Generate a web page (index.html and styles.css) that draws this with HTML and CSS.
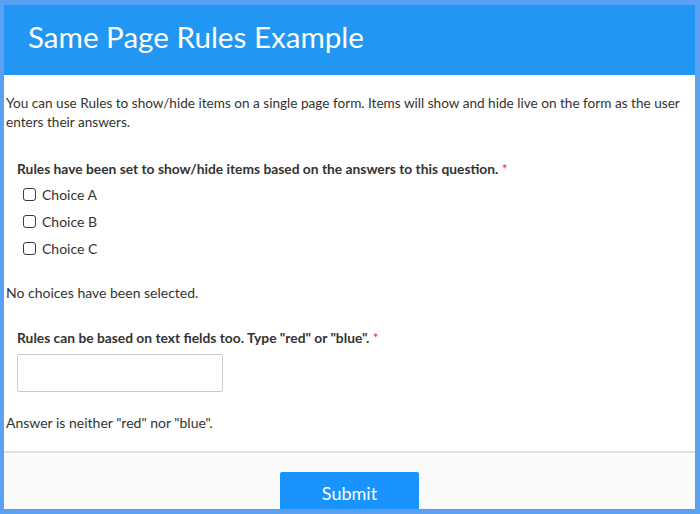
FILE: index.html
```html
<!DOCTYPE html>
<html>
<head>
<meta charset="utf-8">
<link rel="stylesheet" href="styles.css">
</head>
<body>
<div class="frame">
  <header class="header"><h1 class="title">Same Page Rules Example</h1></header>
  <main class="content">
    <p class="intro">You can use Rules to show/hide items on a single page form. Items will show and hide live on the form as the user enters their answers.</p>
    <div class="question q1">
      <div class="label">Rules have been set to show/hide items based on the answers to this question. <span class="req">*</span></div>
      <label class="choice"><input type="checkbox" class="box"><span>Choice A</span></label>
      <label class="choice"><input type="checkbox" class="box"><span>Choice B</span></label>
      <label class="choice"><input type="checkbox" class="box"><span>Choice C</span></label>
    </div>
    <p class="note n1">No choices have been selected.</p>
    <div class="question q2">
      <div class="label">Rules can be based on text fields too. Type "red" or "blue". <span class="req">*</span></div>
      <input type="text" class="field">
    </div>
    <p class="note n2">Answer is neither "red" nor "blue".</p>
  </main>
  <footer class="footer"><button class="submit">Submit</button></footer>
</div>
</body>
</html>
```
FILE: styles.css
```css
html, body {
  margin: 0;
  padding: 0;
  height: 514px;
  overflow: hidden;
}
body {
  background: #5ba1f3;
  font-family: Lato, "Open Sans", sans-serif;
  color: #333;
}
.frame {
  margin: 5px 5px 0 4px;
  height: 504px;
  background: #fff;
  display: flex;
  flex-direction: column;
  overflow: hidden;
}
.header {
  height: 70px;
  box-sizing: border-box;
  background: #2196f3;
  display: flex;
  align-items: center;
  padding: 0 0 6px 24px;
  flex-shrink: 0;
}
.title {
  margin: 0;
  font-weight: 400;
  font-size: 29.6px;
  color: #fff;
  line-height: 36px;
}
.content {
  padding: 0 2px;
}
.intro {
  margin: 19px 0 0;
  font-size: 13.6px;
  line-height: 19px;
}
.question {
  padding-left: 11px;
}
.q1 { margin-top: 28px; }
.label {
  font-size: 13.8px;
  font-weight: 700;
  line-height: 18px;
}
.req { color: #e53935; font-weight: 400; }
.q1 .label { margin-bottom: 3px; }
.choice {
  display: flex;
  align-items: center;
  height: 27px;
  padding-left: 6px;
  font-size: 14px;
}
.box {
  appearance: none;
  -webkit-appearance: none;
  width: 13px;
  height: 13px;
  margin: 0 6px 0 0;
  border: 1.5px solid #3a3a48;
  border-radius: 3px;
  background: #fff;
  box-sizing: border-box;
}
.note {
  font-size: 14px;
  line-height: 19px;
  margin: 0;
}
.n1 { margin-top: 21px; }
.q2 { margin-top: 27px; }
.field {
  display: block;
  margin-top: 7px;
  width: 206px;
  height: 38px;
  box-sizing: border-box;
  border: 1px solid #ccc;
  border-radius: 2px;
}
.n2 { margin-top: 21px; }
.footer {
  margin-top: auto;
  height: 58px;
  box-sizing: border-box;
  border-top: 2px solid #e0e0e0;
  background: #fafafa;
  display: flex;
  justify-content: center;
  align-items: flex-start;
  padding-top: 19px;
  flex-shrink: 0;
  overflow: hidden;
}
.submit {
  width: 139px;
  height: 42px;
  flex-shrink: 0;
  background: #1993fe;
  color: #fff;
  border: none;
  border-radius: 2px;
  font-family: Lato, sans-serif;
  font-size: 18px;
  padding: 0;
}
```
